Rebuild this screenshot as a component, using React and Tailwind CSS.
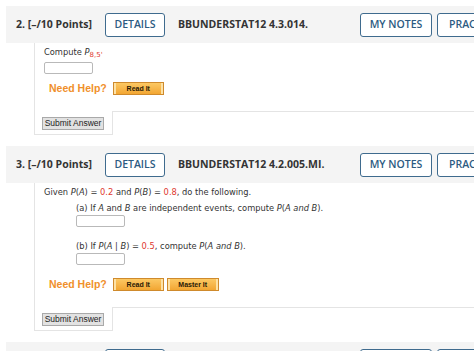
const sans = "font-['Open_Sans',sans-serif]";
const verd = "font-['DejaVu_Sans','Verdana',sans-serif]";
const arial = "font-['Liberation_Sans',Arial,sans-serif]";

function OutlineButton({ children, className = "" }) {
  return (
    <button
      className={`h-[24px] shrink-0 rounded-[3px] border border-[#3f6b8e] bg-white text-[10.5px] font-semibold text-[#2d5b82] ${sans} ${className}`}
    >
      {children}
    </button>
  );
}

function Header({ num, code }) {
  return (
    <div className="ml-[6px] flex h-[37px] w-[640px] items-center bg-[#f4f4f4] pl-[10px]">
      <div className="flex w-[344px] items-center">
        <span className={`text-[10.5px] font-bold text-[#333] ${sans}`}>
          {num}. [–/10 Points]
        </span>
        <OutlineButton className="ml-[13px] w-[60px]">DETAILS</OutlineButton>
        <span className={`ml-[13px] text-[10.5px] font-bold text-[#333] ${sans}`}>
          {code}
        </span>
      </div>
      <OutlineButton className="w-[72px]">MY NOTES</OutlineButton>
      <OutlineButton className="ml-[5px] px-[11px]">PRACTICE ANOTHER</OutlineButton>
    </div>
  );
}

function OrangeButton({ children, w }) {
  return (
    <button
      className={`h-[13px] ${w} shrink-0 border border-[#cf8a2c] bg-gradient-to-b from-[#fcc862] to-[#f2a631] px-[3px] text-[7px] font-bold leading-none text-[#2a1a05] shadow-[inset_2px_0_0_#fde2a6,inset_-2px_0_0_#fde2a6] ${arial}`}
    >
      {children}
    </button>
  );
}

function NeedHelp({ master }) {
  return (
    <div className="flex items-center pl-[5px]">
      <span className={`text-[10.5px] font-bold text-[#f0902b] ${arial}`}>
        Need Help?
      </span>
      <div className="ml-[6px] flex gap-[3px]">
        <OrangeButton w="w-[51px]">Read It</OrangeButton>
        {master && <OrangeButton w="w-[52px]">Master It</OrangeButton>}
      </div>
    </div>
  );
}

function AnswerBox() {
  return <div className="h-[12px] w-[49px] rounded-[2px] border border-[#b9b9b9] bg-white" />;
}

function SubmitTab() {
  return (
    <div className="flex">
      <div className="h-[24px] w-[78px] border-r border-b border-[#e4e4e4] pl-[7px] pt-[6px]">
        <button
          className={`flex h-[13px] w-[62px] items-center justify-center border border-[#a9a9a9] bg-[#e2e2e2] text-[8.5px] leading-none text-[#222] ${arial}`}
        >
          Submit Answer
        </button>
      </div>
      <div className="flex-1 border-t border-[#e4e4e4]" />
    </div>
  );
}

const Red = ({ children }) => <span className="text-[#e03a2f]">{children}</span>;

export default function App() {
  return (
    <div className="h-[351px] w-[474px] overflow-hidden bg-white pt-[6px]">
      {/* question 2 */}
      <Header num={2} code="BBUNDERSTAT12 4.3.014." />
      <div className="ml-[34px] border-l border-[#e4e4e4]">
        <div className={`pl-[9px] pt-[3px] text-[8.3px] leading-[13px] text-[#333] ${verd}`}>
          <div>
            Compute <i>P</i>
            <sub className="text-[7px] text-[#e03a2f]">8,5'</sub>
          </div>
          <div className="mt-[3px]">
            <AnswerBox />
          </div>
          <div className="mt-[8px] mb-[16px]">
            <NeedHelp />
          </div>
        </div>
        <SubmitTab />
      </div>

      {/* question 3 */}
      <div className="mt-[11px]">
        <Header num={3} code="BBUNDERSTAT12 4.2.005.MI." />
      </div>
      <div className="ml-[34px] border-l border-[#e4e4e4]">
        <div className={`pl-[9px] pt-[3px] text-[8.3px] leading-[13px] text-[#333] ${verd}`}>
          <div>
            Given <i>P</i>(<i>A</i>) = <Red>0.2</Red> and <i>P</i>(<i>B</i>) = <Red>0.8</Red>, do the following.
          </div>
          <div className="ml-[32px]">
            <div className="mt-[3px]">
              (a) If <i>A</i> and <i>B</i> are independent events, compute <i>P</i>(<i>A and B</i>).
            </div>
            <AnswerBox />
            <div className="mt-[13px]">
              (b) If <i>P</i>(<i>A</i> | <i>B</i>) = <Red>0.5</Red>, compute <i>P</i>(<i>A and B</i>).
            </div>
            <AnswerBox />
          </div>
          <div className="mt-[13px] mb-[16px]">
            <NeedHelp master />
          </div>
        </div>
        <SubmitTab />
      </div>

      <div className="mt-[11px]">
        <Header num={4} code="" />
      </div>
    </div>
  );
}
